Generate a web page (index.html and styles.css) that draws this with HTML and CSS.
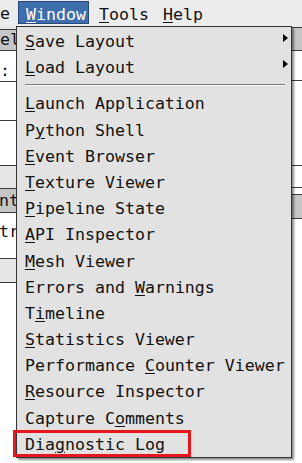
FILE: index.html
```html
<!DOCTYPE html>
<html>
<head>
<meta charset="utf-8">
<link rel="stylesheet" href="styles.css">
</head>
<body>
<div class="app">
  <div class="menubar">
    <span class="mb-item mb-file">e</span>
    <span class="mb-item mb-active"><u>W</u>indow</span>
    <span class="mb-item"><u>T</u>ools</span>
    <span class="mb-item mb-help"><u>H</u>elp</span>
  </div>
  <div class="workspace">
    <div class="pane pane-left">
      <div class="row r-gap"></div>
      <div class="row r-head"><span class="cell-text">el</span></div>
      <div class="row r-white r-h30"><span class="cell-text colon">:</span></div>
      <div class="row r-white r-h38"></div>
      <div class="row r-white r-h44"></div>
      <div class="row r-light r-h22"></div>
      <div class="row r-head2"><span class="cell-text nt">nt</span></div>
      <div class="row r-white r-h45"><span class="cell-text tr">tr</span></div>
      <div class="row r-light r-h23"></div>
      <div class="row r-rest"></div>
    </div>
    <div class="pane pane-mid"></div>
    <div class="pane pane-right">
      <div class="row r-gap1"></div>
      <div class="row r-rhead"></div>
      <div class="row r-white r-h29"></div>
      <div class="row r-white r-h84"></div>
      <div class="row r-white r-h21"></div>
      <div class="row r-white r-h6"></div>
      <div class="row r-rhead2"></div>
      <div class="row r-rest"></div>
    </div>
  </div>

  <div class="menu">
    <div class="mi"><span><u>S</u>ave Layout</span><span class="sub"></span></div>
    <div class="mi"><span><u>L</u>oad Layout</span><span class="sub"></span></div>
    <div class="sep"></div>
    <div class="mi"><span><u>L</u>aunch Application</span></div>
    <div class="mi"><span>P<u>y</u>thon Shell</span></div>
    <div class="mi"><span><u>E</u>vent Browser</span></div>
    <div class="mi"><span><u>T</u>exture Viewer</span></div>
    <div class="mi"><span><u>P</u>ipeline State</span></div>
    <div class="mi"><span><u>A</u>PI Inspector</span></div>
    <div class="mi"><span><u>M</u>esh Viewer</span></div>
    <div class="mi"><span>Errors and <u>W</u>arnings</span></div>
    <div class="mi"><span>T<u>i</u>meline</span></div>
    <div class="mi"><span><u>S</u>tatistics Viewer</span></div>
    <div class="mi"><span>Performance <u>C</u>ounter Viewer</span></div>
    <div class="mi"><span><u>R</u>esource Inspector</span></div>
    <div class="mi"><span>Capture C<u>o</u>mments</span></div>
    <div class="mi"><span>Dia<u>g</u>nostic Log</span></div>
  </div>

  <div class="annot"></div>
</div>
</body>
</html>
```

FILE: styles.css
```css
html, body {
  margin: 0;
  padding: 0;
}
body {
  width: 302px;
  height: 463px;
  overflow: hidden;
  background: #ffffff;
  font-family: "DejaVu Sans Mono", "Liberation Mono", monospace;
  font-size: 16.6px;
  color: #111;
}
u {
  text-decoration: underline;
  text-decoration-thickness: 1px;
  text-underline-offset: 2px;
}
.app {
  position: relative;
  width: 302px;
  height: 463px;
  overflow: hidden;
}

/* menubar */
.menubar {
  display: flex;
  gap: 2px;
  height: 26px;
  background: #ececec;
  white-space: nowrap;
}
.mb-item {
  box-sizing: border-box;
  height: 23px;
  margin-top: 1px;
  padding: 4px 2px 0 7px;
  line-height: 18px;
  border: 1px solid transparent;
}
.mb-file {
  margin-left: 0;
  padding: 4px 0 0 0;
  border: 0;
  width: 14px;
  margin-right: 2px;
}
.mb-active {
  background: #3f6eac;
  border-color: #26497a;
  color: #fff;
}
.mb-help {
  margin-left: 1px;
}

/* background workspace */
.workspace {
  display: grid;
  grid-template-columns: 16px 1fr 10px;
  height: 437px;
}
.pane {
  display: flex;
  flex-direction: column;
  white-space: nowrap;
  min-width: 0;
}
.pane-right {
  overflow: hidden;
}
.row {
  box-sizing: border-box;
  flex: none;
}
.r-gap { height: 3px; background: #e8e8e8; }
.r-gap1 { height: 1px; background: #e8e8e8; }
.r-head {
  height: 22px;
  background: #c6c6c6;
  border-top: 1px solid #3a3a3a;
  border-bottom: 1px solid #3a3a3a;
  line-height: 20px;
}
.r-rhead {
  height: 24px;
  background: #c6c6c6;
  border-top: 1px solid #3a3a3a;
  border-bottom: 1px solid #3a3a3a;
}
.r-white { background: #ffffff; border-bottom: 1px solid #3a3a3a; }
.r-light { background: #e6e6e6; border-bottom: 1px solid #3a3a3a; }
.r-h30 { height: 31px; }
.r-h38 { height: 39px; }
.r-h44 { height: 45px; }
.r-h22 { height: 23px; }
.r-h45 { height: 46px; }
.r-h23 { height: 24px; }
.r-h29 { height: 30px; }
.r-h84 { height: 85px; }
.r-h21 { height: 22px; }
.r-h6 { height: 7px; }
.r-head2 {
  height: 24px;
  background: #c6c6c6;
  border-bottom: 1px solid #3a3a3a;
  line-height: 23px;
}
.r-rhead2 {
  height: 24px;
  background: #c6c6c6;
  border-bottom: 1px solid #3a3a3a;
}
.r-rest { flex: 1; background: #ffffff; }
.cell-text {
  display: block;
  margin-left: 0;
}
.colon {
  padding-top: 10px;
  line-height: 20px;
  margin-left: 0;
}
.nt { margin-left: -1px; }
.tr {
  padding-top: 9px;
  line-height: 20px;
  margin-left: -1px;
}

/* popup menu */
.menu {
  position: absolute;
  left: 16px;
  top: 26px;
  width: 276px;
  box-sizing: border-box;
  background: #e2e2e2;
  border: 1px solid #333;
  padding: 1px 0 0 0;
  box-shadow: 2px 2px 2px rgba(0, 0, 0, 0.45);
  white-space: nowrap;
}
.mi {
  display: flex;
  box-sizing: border-box;
  height: 26.2px;
  padding: 2px 0 0 8px;
  line-height: 24.2px;
}
.sub {
  flex: none;
  align-self: flex-start;
  width: 0;
  height: 0;
  margin-left: auto;
  margin-right: 3px;
  margin-top: 4px;
  border-left: 5px solid #000;
  border-top: 4.5px solid transparent;
  border-bottom: 4.5px solid transparent;
}
.sep {
  height: 0;
  margin: 4px 6px 4px 8px;
  border-top: 1px solid #7a7a7a;
  border-bottom: 1px solid #f8f8f8;
}

/* annotation highlight */
.annot {
  position: absolute;
  left: 13px;
  top: 430px;
  width: 178px;
  height: 27px;
  box-sizing: border-box;
  border: 3px solid #e8161c;
}
```
